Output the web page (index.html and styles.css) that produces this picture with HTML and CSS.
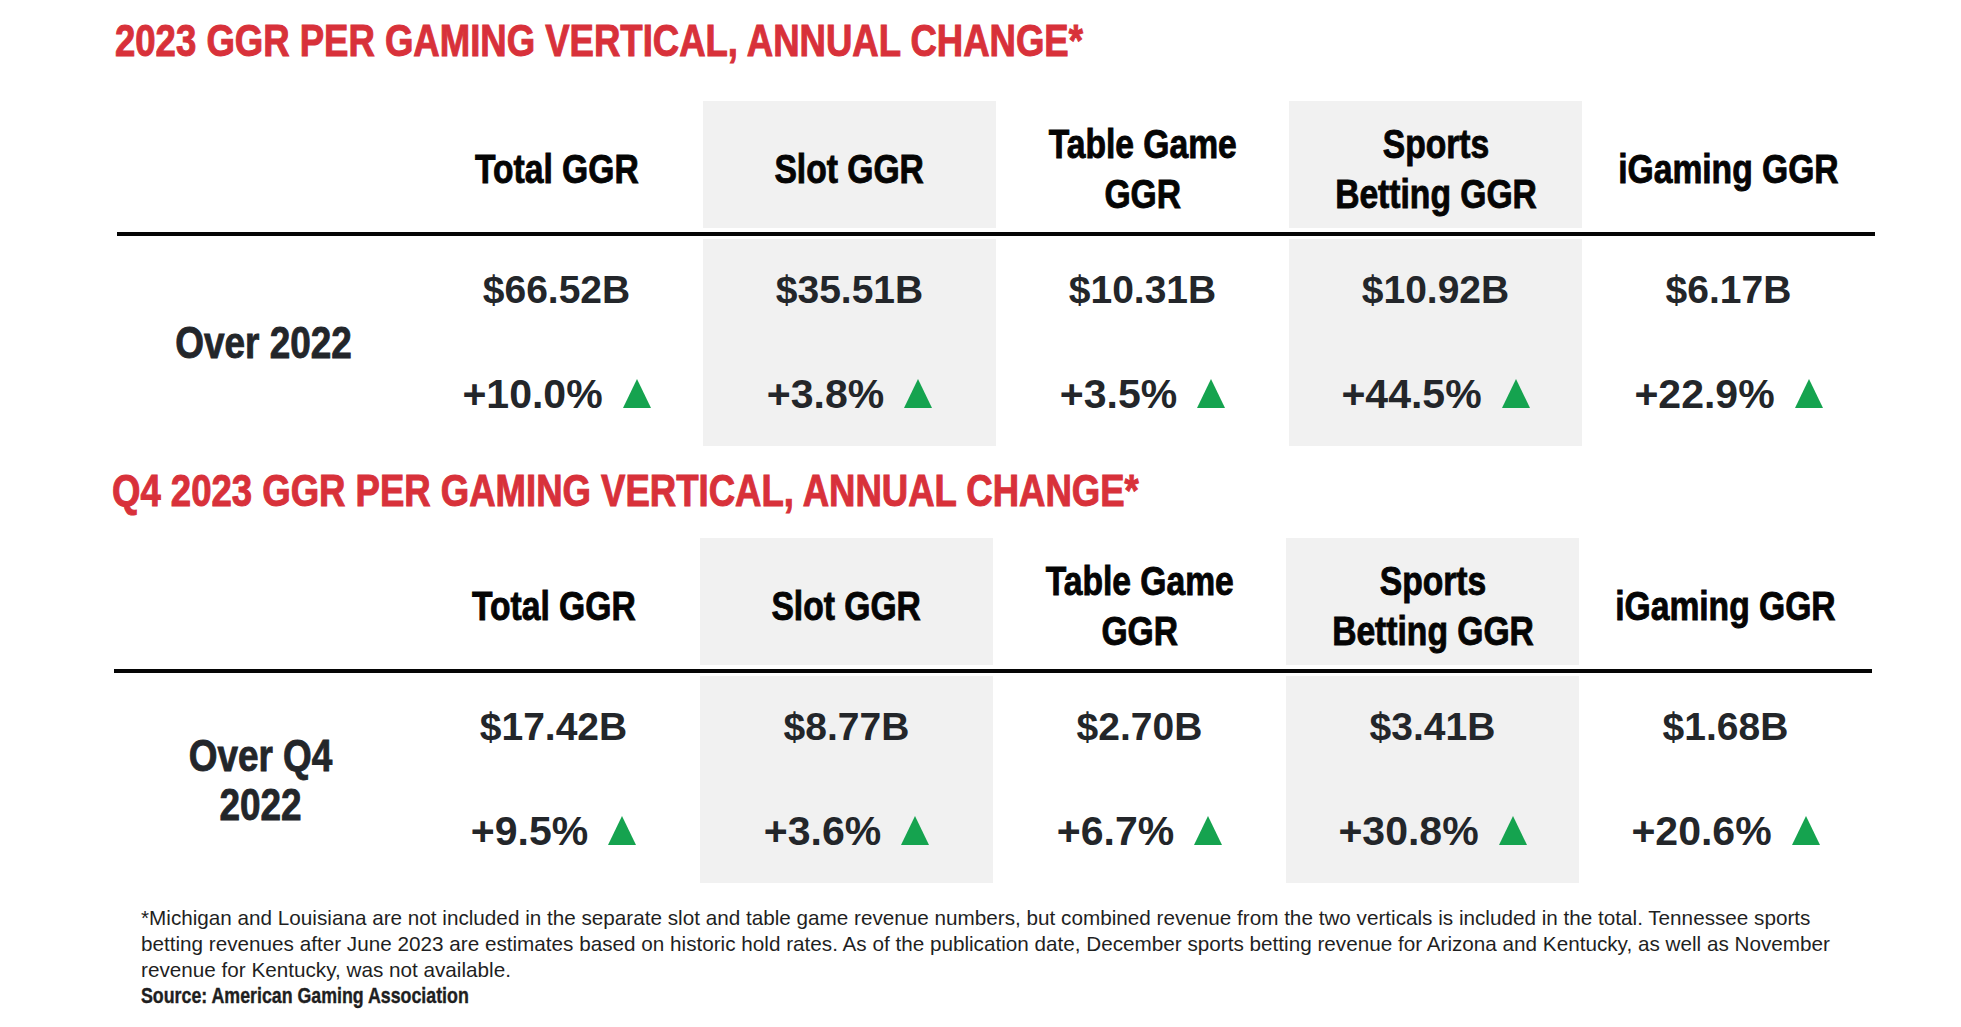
FILE: index.html
```html
<!DOCTYPE html>
<html lang="en">
<head>
<meta charset="utf-8">
<title>GGR per gaming vertical</title>
<link rel="stylesheet" href="styles.css">
</head>
<body>
<main class="page">
  <section class="block block--annual">
    <h2 class="title">2023 GGR PER GAMING VERTICAL, ANNUAL CHANGE*</h2>
    <div class="table">
      <div class="head"></div>
      <div class="head"><span class="cond">Total GGR</span></div>
      <div class="head shade"><span class="cond">Slot GGR</span></div>
      <div class="head"><span class="cond">Table Game<br>GGR</span></div>
      <div class="head shade"><span class="cond">Sports<br>Betting GGR</span></div>
      <div class="head"><span class="cond">iGaming GGR</span></div>
      <div class="rule"></div>
      <div class="label"><span class="cond">Over 2022</span></div>
      <div class="cell"><span class="value">$66.52B</span><span class="change">+10.0%<i class="up"></i></span></div>
      <div class="cell shade"><span class="value">$35.51B</span><span class="change">+3.8%<i class="up"></i></span></div>
      <div class="cell"><span class="value">$10.31B</span><span class="change">+3.5%<i class="up"></i></span></div>
      <div class="cell shade"><span class="value">$10.92B</span><span class="change">+44.5%<i class="up"></i></span></div>
      <div class="cell"><span class="value">$6.17B</span><span class="change">+22.9%<i class="up"></i></span></div>
    </div>
  </section>

  <section class="block block--q4">
    <h2 class="title">Q4 2023 GGR PER GAMING VERTICAL, ANNUAL CHANGE*</h2>
    <div class="table">
      <div class="head"></div>
      <div class="head"><span class="cond">Total GGR</span></div>
      <div class="head shade"><span class="cond">Slot GGR</span></div>
      <div class="head"><span class="cond">Table Game<br>GGR</span></div>
      <div class="head shade"><span class="cond">Sports<br>Betting GGR</span></div>
      <div class="head"><span class="cond">iGaming GGR</span></div>
      <div class="rule"></div>
      <div class="label"><span class="cond">Over Q4<br>2022</span></div>
      <div class="cell"><span class="value">$17.42B</span><span class="change">+9.5%<i class="up"></i></span></div>
      <div class="cell shade"><span class="value">$8.77B</span><span class="change">+3.6%<i class="up"></i></span></div>
      <div class="cell"><span class="value">$2.70B</span><span class="change">+6.7%<i class="up"></i></span></div>
      <div class="cell shade"><span class="value">$3.41B</span><span class="change">+30.8%<i class="up"></i></span></div>
      <div class="cell"><span class="value">$1.68B</span><span class="change">+20.6%<i class="up"></i></span></div>
    </div>
  </section>

  <footer class="notes">
    <p class="note">*Michigan and Louisiana are not included in the separate slot and table game revenue numbers, but combined revenue from the two verticals is included in the total. Tennessee sports<br>betting revenues after June 2023 are estimates based on historic hold rates. As of the publication date, December sports betting revenue for Arizona and Kentucky, as well as November<br>revenue for Kentucky, was not available.</p>
    <p class="source"><span class="cond cond--left">Source: American Gaming Association</span></p>
  </footer>
</main>
</body>
</html>
```

FILE: styles.css
```css
* { box-sizing: border-box; }

html, body {
  margin: 0;
  padding: 0;
  background: #ffffff;
}

.page {
  padding: 19px 0 0 117px;
  width: 1961px;
}

/* condensed bold face: Liberation Sans Bold narrowed like Arial Narrow */
.cond {
  display: inline-block;
  transform: scaleX(0.82);
  transform-origin: 50% 50%;
  -webkit-text-stroke: 0.9px currentColor;
}
.cond--left {
  transform-origin: 0 50%;
  -webkit-text-stroke: 0.4px currentColor;
}

.title {
  margin: 0 0 0 -2px;
  font-family: "Liberation Sans", Arial, sans-serif;
  font-weight: 700;
  font-size: 44px;
  line-height: 44px;
  color: #d8313a;
  white-space: nowrap;
  transform: scaleX(0.83);
  transform-origin: 0 50%;
  -webkit-text-stroke: 1px currentColor;
}

.block--annual .title { margin-bottom: 38px; }

.block--q4 {
  margin: 23px 0 0 -3px;
}
.block--q4 .title { margin-bottom: 25px; }

.table {
  display: grid;
  grid-template-columns: repeat(6, 293px);
  grid-template-rows: 127px 11px 207px;
}

.shade { background: #f1f1f1; }

.head {
  display: flex;
  align-items: center;
  justify-content: center;
  padding-top: 9px;
  text-align: center;
  font-family: "Liberation Sans", Arial, sans-serif;
  font-weight: 700;
  font-size: 41px;
  line-height: 50px;
  color: #050505;
  white-space: nowrap;
}

.rule {
  grid-column: 1 / -1;
  align-self: start;
  height: 4px;
  margin-top: 4px;
  background: #050505;
}

.label {
  display: flex;
  align-items: center;
  justify-content: center;
  text-align: center;
  font-family: "Liberation Sans", Arial, sans-serif;
  font-weight: 700;
  font-size: 45px;
  line-height: 49px;
  color: #23262a;
  white-space: nowrap;
}

.cell {
  display: flex;
  flex-direction: column;
  align-items: center;
  gap: 56px;
  padding-top: 27px;
  font-family: "Liberation Sans", Arial, sans-serif;
  font-weight: 700;
  color: #23262a;
}

.value {
  font-size: 39px;
  line-height: 48px;
}

.change {
  font-size: 41px;
  line-height: 48px;
  white-space: nowrap;
}

.up {
  display: inline-block;
  width: 0;
  height: 0;
  margin-left: 20px;
  border-left: 14.5px solid transparent;
  border-right: 14.5px solid transparent;
  border-bottom: 29px solid #15a34f;
}

.notes {
  margin: 22px 0 0 24px;
  color: #1f1f1f;
}

.note {
  margin: 0;
  font-family: "Liberation Sans", Arial, sans-serif;
  font-size: 20.7px;
  line-height: 26px;
  white-space: nowrap;
}

.source {
  margin: 0;
  font-family: "Liberation Sans", Arial, sans-serif;
  font-weight: 700;
  font-size: 21.7px;
  line-height: 26px;
  white-space: nowrap;
}
```
